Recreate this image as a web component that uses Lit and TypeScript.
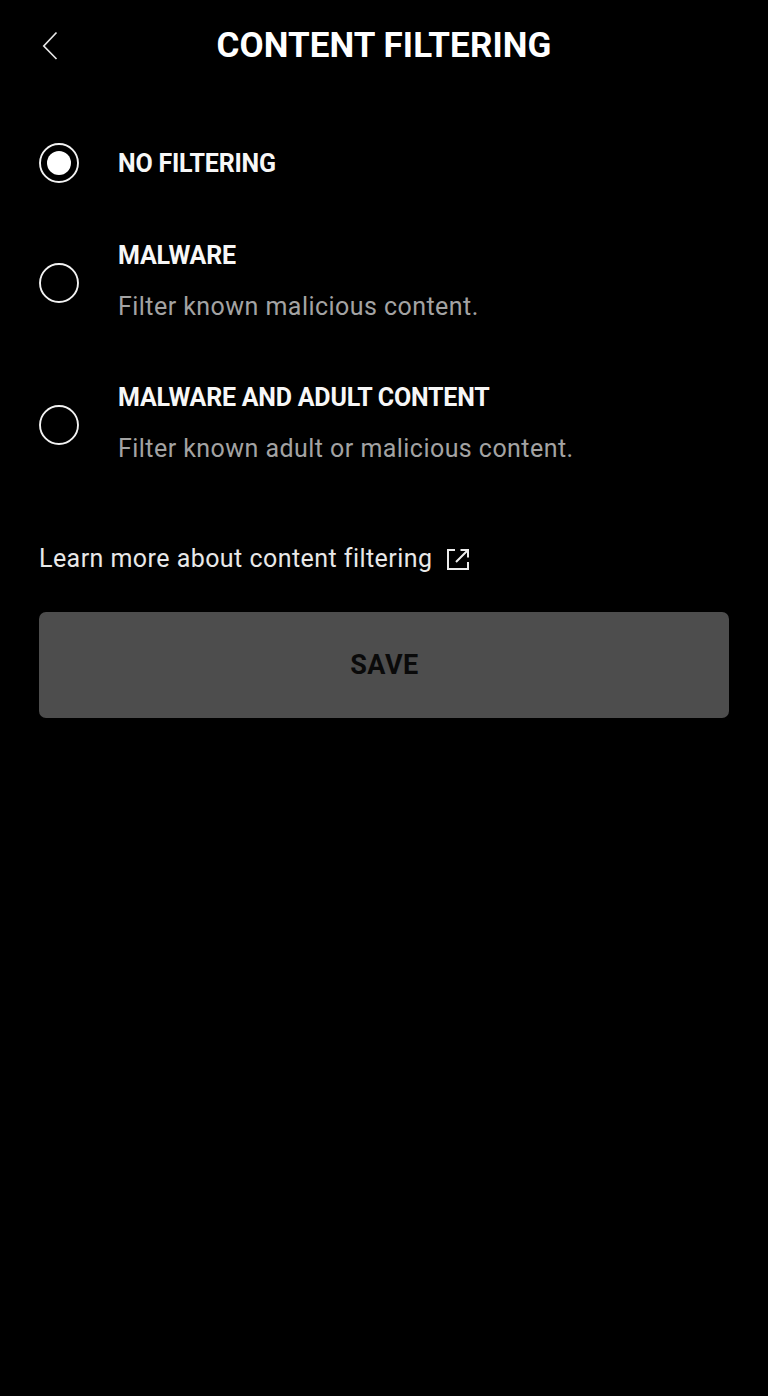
import { LitElement, html, svg, css } from "lit";
import { customElement } from "lit/decorators.js";

const opts = [
  { t: "NO FILTERING", d: "", on: true },
  { t: "MALWARE", d: "Filter known malicious content.", on: false },
  { t: "MALWARE AND ADULT CONTENT", d: "Filter known adult or malicious content.", on: false },
];

@customElement("app-root")
export class AppRoot extends LitElement {
  static styles = css`
    :host { display: block; width: 768px; height: 1396px; background: #000; color: #fff; font-family: "Roboto", "Liberation Sans", sans-serif; overflow: hidden; }
    .head { height: 90px; display: flex; align-items: center; justify-content: center; position: relative; }
    .back { position: absolute; left: 39px; top: 28px; }
    h1 { margin: 0; padding-top: 2px; font-size: 35px; font-weight: 700; line-height: 40px; letter-spacing: 0.1px; }
    .list { padding: 24px 39px 0; display: flex; flex-direction: column; }
    .opt { display: flex; align-items: center; gap: 39px; }
    .opt.first { height: 98px; }
    .opt.two { height: 142px; }
    .radio { width: 40px; height: 40px; flex: none; display: block; }
    .first .txt { padding-top: 2px; }
    .two .txt { padding-bottom: 3px; }
    .t { font-size: 25px; font-weight: 700; line-height: 30px; letter-spacing: -0.22px; color: #f7f7f7; }
    .d { font-size: 25px; line-height: 30px; color: #a3a3a3; margin-top: 21px; letter-spacing: 0.45px; }
    .learn { margin: 43px 39px 0; display: flex; align-items: center; gap: 13px; font-size: 25px; line-height: 40px; letter-spacing: 0.45px; color: #e8e8e8; }
    .save { margin: 33px 39px 0; height: 106px; background: #4d4d4d; border-radius: 7px; display: flex; align-items: center; justify-content: center; font-size: 27px; font-weight: 700; color: #0a0a0a; letter-spacing: 0.5px; padding-left: 1px; box-sizing: border-box; }
  `;
  render() {
    return html`
      <div class="head">
        <svg class="back" width="20" height="36" viewBox="0 0 20 36" fill="none" stroke="#e6e6e6" stroke-width="1.7"><path d="M17.500 4.500 4.800 18 17.500 31"/></svg>
        <h1>CONTENT FILTERING</h1>
      </div>
      <div class="list">
        ${opts.map((o) => html`
          <div class="opt ${o.d ? "two" : "first"}">
            <svg class="radio" viewBox="0 0 40 40">
              <circle cx="20" cy="20" r="19" fill="none" stroke="#f2f2f2" stroke-width="1.9"/>
              ${o.on ? svg`<circle cx="20" cy="20" r="12" fill="#fff"/>` : ""}
            </svg>
            <div class="txt">
              <div class="t">${o.t}</div>
              ${o.d ? html`<div class="d">${o.d}</div>` : ""}
            </div>
          </div>`)}
      </div>
      <div class="learn">
        <span>Learn more about content filtering</span>
        <svg width="24" height="24" viewBox="0 0 24 24" fill="none" stroke="#ececec" stroke-width="2"><path d="M9 3H2v19h20v-7M14.500 3H22v7.500M22 3 10 15"/></svg>
      </div>
      <div class="save">SAVE</div>
    `;
  }
}
